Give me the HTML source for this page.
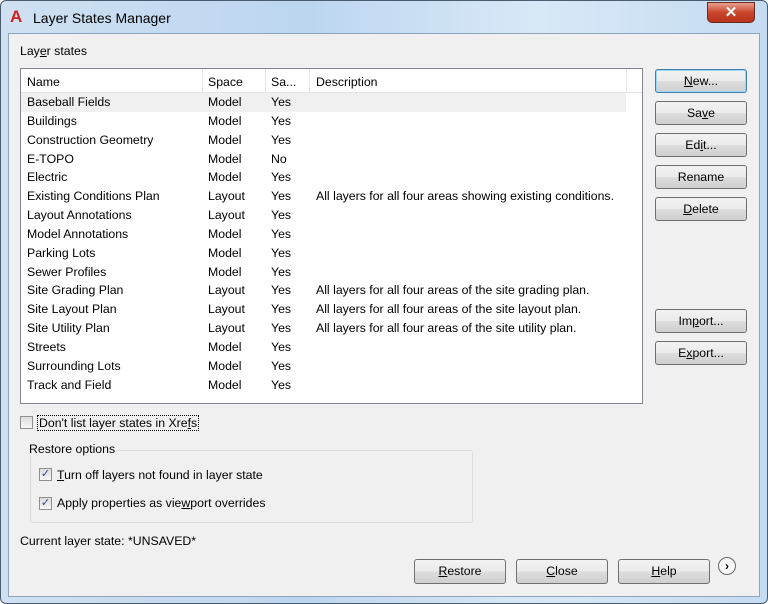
<!DOCTYPE html><html><head><style>
*{margin:0;padding:0;box-sizing:border-box}
body{width:768px;height:604px;overflow:hidden;font-family:"Liberation Sans",sans-serif;font-size:12.3px;color:#000;background:#fff}
.win{position:absolute;left:0;top:0;width:768px;height:604px;background:linear-gradient(90deg,#cfe0f2 0%,#bcd6f0 40%,#d9e8f7 70%,#c4dbf2 100%);border:1px solid #4a5c70;border-radius:6px}
.title{position:absolute;left:32px;top:9px;font-size:14px;color:#000}
.logo{position:absolute;left:9px;top:6px;font:bold 17px "Liberation Sans";color:#d02020}
.xbtn{position:absolute;left:706px;top:1px;width:48px;height:21px;background:linear-gradient(#e8a08f,#c9452c 50%,#b8321c);border:1px solid #6b2a1e;border-radius:0 0 5px 5px;color:#fff;font:bold 15px "Liberation Sans";text-align:center;line-height:19px}
.panel{position:absolute;left:8px;top:33px;width:752px;height:564px;background:#f0f0f0;border:1px solid #8ea4bd}
.a{position:absolute;white-space:nowrap}
.list{position:absolute;left:20px;top:68px;width:623px;height:336px;background:#fff;border:1px solid #828790}
.hdr{position:absolute;left:0;top:0;width:621px;height:24px;background:#fff;border-bottom:1px solid #e5e5e5}
.div{position:absolute;top:0;width:1px;height:24px;background:#e5e5e5}
.row{position:absolute;left:0;width:605px;height:19px}
.row span{position:absolute;top:2px}
.btn{position:absolute;width:92px;height:24px;border:1px solid #707070;border-radius:3px;background:linear-gradient(#f2f2f2 0%,#ebebeb 50%,#dddddd 51%,#cfcfcf 100%);text-align:center;line-height:22px}
.cb{position:absolute;width:13px;height:13px;border:1px solid #8f8f8f;background:linear-gradient(#dcdcdc,#f8f8f8)}
.grp{position:absolute;left:30px;top:450px;width:443px;height:73px;border:1px solid #dcdcdc;border-radius:3px}
u{text-decoration:underline}
</style></head><body>
<div class="win">
<div class="logo">A</div>
<div class="title">Layer States Manager</div>
<div class="xbtn">✕</div>
</div>
<div class="panel"></div>
<div class="a" style="left:20px;top:44px">Lay<u>e</u>r states</div>
<div class="list">
<div class="hdr">
<span class="a" style="left:6px;top:6px">Name</span>
<span class="a" style="left:187px;top:6px">Space</span>
<span class="a" style="left:250px;top:6px">Sa...</span>
<span class="a" style="left:295px;top:6px">Description</span>
<div class="div" style="left:181px"></div><div class="div" style="left:244px"></div><div class="div" style="left:288px"></div><div class="div" style="left:605px"></div>
</div>
<div class="row" style="top:24px;background:#f0f0f0"><span style="left:6px">Baseball Fields</span><span style="left:187px">Model</span><span style="left:250px">Yes</span></div>
<div class="row" style="top:43px"><span style="left:6px">Buildings</span><span style="left:187px">Model</span><span style="left:250px">Yes</span></div>
<div class="row" style="top:62px"><span style="left:6px">Construction Geometry</span><span style="left:187px">Model</span><span style="left:250px">Yes</span></div>
<div class="row" style="top:81px"><span style="left:6px">E-TOPO</span><span style="left:187px">Model</span><span style="left:250px">No</span></div>
<div class="row" style="top:99px"><span style="left:6px">Electric</span><span style="left:187px">Model</span><span style="left:250px">Yes</span></div>
<div class="row" style="top:118px"><span style="left:6px">Existing Conditions Plan</span><span style="left:187px">Layout</span><span style="left:250px">Yes</span><span style="left:295px">All layers for all four areas showing existing conditions.</span></div>
<div class="row" style="top:137px"><span style="left:6px">Layout Annotations</span><span style="left:187px">Layout</span><span style="left:250px">Yes</span></div>
<div class="row" style="top:156px"><span style="left:6px">Model Annotations</span><span style="left:187px">Model</span><span style="left:250px">Yes</span></div>
<div class="row" style="top:175px"><span style="left:6px">Parking Lots</span><span style="left:187px">Model</span><span style="left:250px">Yes</span></div>
<div class="row" style="top:194px"><span style="left:6px">Sewer Profiles</span><span style="left:187px">Model</span><span style="left:250px">Yes</span></div>
<div class="row" style="top:212px"><span style="left:6px">Site Grading Plan</span><span style="left:187px">Layout</span><span style="left:250px">Yes</span><span style="left:295px">All layers for all four areas of the site grading plan.</span></div>
<div class="row" style="top:231px"><span style="left:6px">Site Layout Plan</span><span style="left:187px">Layout</span><span style="left:250px">Yes</span><span style="left:295px">All layers for all four areas of the site layout plan.</span></div>
<div class="row" style="top:250px"><span style="left:6px">Site Utility Plan</span><span style="left:187px">Layout</span><span style="left:250px">Yes</span><span style="left:295px">All layers for all four areas of the site utility plan.</span></div>
<div class="row" style="top:269px"><span style="left:6px">Streets</span><span style="left:187px">Model</span><span style="left:250px">Yes</span></div>
<div class="row" style="top:288px"><span style="left:6px">Surrounding Lots</span><span style="left:187px">Model</span><span style="left:250px">Yes</span></div>
<div class="row" style="top:307px"><span style="left:6px">Track and Field</span><span style="left:187px">Model</span><span style="left:250px">Yes</span></div>
</div>
<div class="btn" style="left:655px;top:69px;border-color:#3c7fb1;box-shadow:inset 0 0 0 1px #9fd5f5"><u>N</u>ew...</div>
<div class="btn" style="left:655px;top:101px">Sa<u>v</u>e</div>
<div class="btn" style="left:655px;top:133px">Ed<u>i</u>t...</div>
<div class="btn" style="left:655px;top:165px">Rename</div>
<div class="btn" style="left:655px;top:197px"><u>D</u>elete</div>
<div class="btn" style="left:655px;top:309px">Im<u>p</u>ort...</div>
<div class="btn" style="left:655px;top:341px">E<u>x</u>port...</div>
<div class="cb" style="left:20px;top:416px"></div>
<div class="a" style="left:37px;top:415px;border:1px dotted #000;padding:0 1px">Don't list layer states in Xre<u>f</u>s</div>
<div class="grp"></div>
<div class="a" style="left:27px;top:442px;background:#f0f0f0;padding:0 2px">Restore options</div>
<div class="cb" style="left:39px;top:468px;font-size:11px;line-height:11px;color:#2a4a9a;text-align:center">✓</div>
<div class="a" style="left:57px;top:468px"><u>T</u>urn off layers not found in layer state</div>
<div class="cb" style="left:39px;top:497px;font-size:11px;line-height:11px;color:#2a4a9a;text-align:center">✓</div>
<div class="a" style="left:57px;top:496px">Apply properties as vie<u>w</u>port overrides</div>
<div class="a" style="left:20px;top:534px">Current layer state: *UNSAVED*</div>
<div class="btn" style="left:414px;top:559px;height:25px"><u>R</u>estore</div>
<div class="btn" style="left:516px;top:559px;height:25px"><u>C</u>lose</div>
<div class="btn" style="left:618px;top:559px;height:25px"><u>H</u>elp</div>
<div class="a" style="left:718px;top:557px;width:18px;height:18px;border:1px solid #666;border-radius:50%;background:#f8f8f8;font:bold 12px 'Liberation Sans';text-align:center;line-height:16px">›</div>
</body></html>
